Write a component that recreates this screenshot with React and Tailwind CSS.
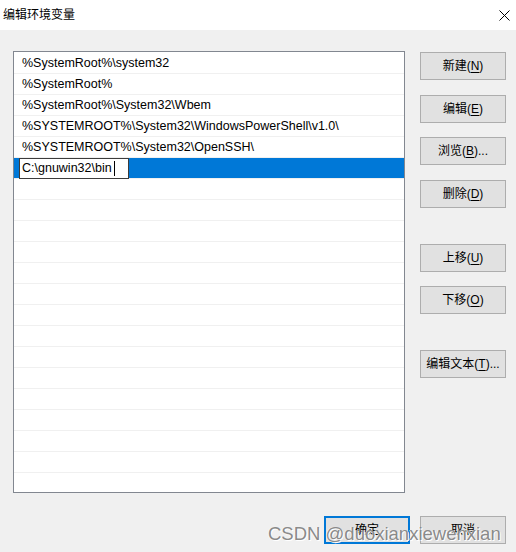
import React from "react";

const font = { fontFamily: '"Liberation Sans", "Noto Sans CJK SC", sans-serif' };

const rows = [
  "%SystemRoot%\\system32",
  "%SystemRoot%",
  "%SystemRoot%\\System32\\Wbem",
  "%SYSTEMROOT%\\System32\\WindowsPowerShell\\v1.0\\",
  "%SYSTEMROOT%\\System32\\OpenSSH\\",
];

function Btn({ label, u, rest = "", className = "" }) {
  return (
    <button
      className={`w-[86px] h-[28px] bg-[#e1e1e1] border border-[#adadad] text-[12px] text-black flex items-center justify-center ${className}`}
    >
      <span>
        {label}(<span className="underline underline-offset-2">{u}</span>){rest}
      </span>
    </button>
  );
}

export default function App() {
  const empty = Array.from({ length: 16 });
  return (
    <div
      className="relative w-[516px] h-[552px] bg-[#f0f0f0] flex flex-col overflow-hidden text-black"
      style={font}
    >
      <div className="h-[30px] bg-white flex items-center justify-between pl-[3px] pr-[6px]">
        <span className="text-[12px] leading-none">编辑环境变量</span>
        <svg width="11" height="11" viewBox="0 0 11 11">
          <path d="M0.5 0.5 L10.5 10.5 M10.5 0.5 L0.5 10.5" stroke="#000" strokeWidth="1" />
        </svg>
      </div>
      <div className="flex pl-[13px] pt-[21px]">
        <div className="w-[392px] h-[442px] bg-white border border-[#828790] overflow-hidden pt-[1px]">
          {rows.map((r) => (
            <div
              key={r}
              className="h-[21px] border-b border-[#f0f0f0] pl-[8px] flex items-center text-[12.5px] whitespace-nowrap"
            >
              {r}
            </div>
          ))}
          <div className="h-[21px] border-b border-[#f0f0f0] bg-[#0078d7] pl-[5px] flex items-center">
            <div className="w-[110px] h-[21px] bg-white border border-[#3c3c3c] flex items-center pl-[2px] text-[12.5px] whitespace-nowrap">
              C:\gnuwin32\bin<span className="inline-block w-[1px] h-[15px] bg-black ml-[2px]"></span>
            </div>
          </div>
          {empty.map((_, i) => (
            <div key={i} className="h-[21px] border-b border-[#f0f0f0]"></div>
          ))}
        </div>
        <div className="flex flex-col ml-[15px] pt-[1px]">
          <Btn label="新建" u="N" />
          <Btn label="编辑" u="E" className="mt-[15px]" />
          <Btn label="浏览" u="B" rest="..." className="mt-[14px]" />
          <Btn label="删除" u="D" className="mt-[15px]" />
          <Btn label="上移" u="U" className="mt-[36px]" />
          <Btn label="下移" u="O" className="mt-[14px]" />
          <Btn label="编辑文本" u="T" rest="..." className="mt-[36px]" />
        </div>
      </div>
      <div className="flex justify-end gap-[10px] pr-[10px] mt-[23px]">
        <button className="w-[86px] h-[28px] bg-[#e1e1e1] border-2 border-[#0078d7] text-[12px] flex items-center justify-center">
          确定
        </button>
        <button className="w-[86px] h-[28px] bg-[#e1e1e1] border border-[#adadad] text-[12px] flex items-center justify-center">
          取消
        </button>
      </div>
      <div
        className="absolute left-[268px] top-[525px] text-[18.5px] leading-none text-[#8a8a8a] whitespace-nowrap pointer-events-none"
        style={{ textShadow: "1px 1px 0 #ffffff, -1px 0 0 rgba(255,255,255,0.6)" }}
      >
        CSDN @duoxianxiewenxian
      </div>
    </div>
  );
}
